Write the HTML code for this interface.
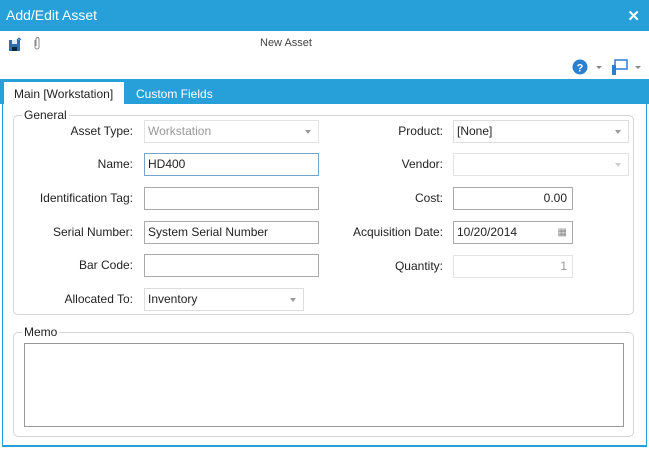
<!DOCTYPE html>
<html><head><meta charset="utf-8"><style>
*{box-sizing:border-box;margin:0;padding:0}
body{width:649px;height:449px;background:#fff;font-family:"Liberation Sans",sans-serif;font-size:12px;color:#222;position:relative;overflow:hidden}
.a{position:absolute}
.title{left:0;top:0;width:649px;height:31px;background:#27a0da;color:#fff;font-size:14px;line-height:31px;padding-left:6px}
.tabbar{left:0;top:79px;width:649px;height:25px;background:#27a0da}
.panel{left:2px;top:104px;width:645px;height:343px;border:1px solid #27a0da;border-top:none;border-bottom:2px solid #27a0da}
.grp{border:1px solid #d4d4d4;border-radius:5px}
.leg{background:#fff;padding:0 2px;font-size:12px;line-height:14px}
.lbl{text-align:right;width:130px;font-size:12px;line-height:22px}
.in{border:1px solid #aaa;background:#fff;height:23px;line-height:21px;padding-left:3px;font-size:12px}
.dis{border:1px solid #e3e3e3;color:#999}
.arr{position:absolute;right:7px;top:9px;width:0;height:0;border-left:3px solid transparent;border-right:3px solid transparent;border-top:4px solid #999}
</style></head><body>
<div class="a title">Add/Edit Asset</div>
<div class="a" style="right:9px;top:7px;color:#fff;font-size:15px;font-weight:bold">✕</div>
<svg class="a" style="left:9px;top:37px" width="14" height="14"><rect x="0" y="3" width="11" height="11" fill="#2a6fb0"/><rect x="3" y="3" width="5" height="4" fill="#dfe9f3"/><rect x="3" y="10" width="5" height="4" fill="#123"/><path d="M10 1v6M8 3l2-2 2 2" stroke="#2a6fb0" fill="none"/></svg>
<svg class="a" style="left:33px;top:36px" width="8" height="15"><path d="M2 4v7a2 2 0 004 0V3a1.5 1.5 0 00-3 0v7" stroke="#888" fill="none"/></svg>
<div class="a" style="left:260px;top:37px;font-size:11px;color:#444">New Asset</div>
<svg class="a" style="left:572px;top:59px" width="16" height="16"><circle cx="8" cy="8" r="7.5" fill="#2b7fd0"/><text x="8" y="12.5" font-size="11" font-weight="bold" fill="#fff" text-anchor="middle" font-family="Liberation Sans">?</text></svg>
<div class="a" style="left:596px;top:66px;border-left:3px solid transparent;border-right:3px solid transparent;border-top:3px solid #888"></div>
<svg class="a" style="left:611px;top:59px" width="18" height="17"><rect x="4" y="1" width="12" height="9" fill="#fff" stroke="#2b7fd0" stroke-width="1.5"/><rect x="1" y="6" width="4" height="10" fill="#2b7fd0"/></svg>
<div class="a" style="left:635px;top:66px;border-left:3px solid transparent;border-right:3px solid transparent;border-top:3px solid #888"></div>
<div class="a tabbar"></div>
<div class="a" style="left:4px;top:82px;width:120px;height:23px;background:#fff;line-height:24px;padding-left:10px">Main [Workstation]</div>
<div class="a" style="left:136px;top:82px;line-height:24px;color:#fff">Custom Fields</div>
<div class="a panel"></div>
<div class="a grp" style="left:13px;top:115px;width:621px;height:200px"></div>
<div class="a leg" style="left:22px;top:108px">General</div>
<div class="a lbl" style="left:3px;top:120px">Asset Type:</div>
<div class="a in dis" style="left:144px;top:120px;width:175px">Workstation<span class="arr"></span></div>
<div class="a lbl" style="left:3px;top:153px">Name:</div>
<div class="a in" style="left:144px;top:153px;width:175px;border-color:#7aa3c8">HD400</div>
<div class="a lbl" style="left:3px;top:187px">Identification Tag:</div>
<div class="a in" style="left:144px;top:187px;width:175px"></div>
<div class="a lbl" style="left:3px;top:221px">Serial Number:</div>
<div class="a in" style="left:144px;top:221px;width:175px">System Serial Number</div>
<div class="a lbl" style="left:3px;top:254px">Bar Code:</div>
<div class="a in" style="left:144px;top:254px;width:175px"></div>
<div class="a lbl" style="left:3px;top:288px">Allocated To:</div>
<div class="a in" style="left:144px;top:288px;width:160px;border-color:#ddd">Inventory<span class="arr"></span></div>
<div class="a lbl" style="left:313px;top:120px">Product:</div>
<div class="a in" style="left:453px;top:120px;width:176px;border-color:#ddd">[None]<span class="arr"></span></div>
<div class="a lbl" style="left:313px;top:153px">Vendor:</div>
<div class="a in dis" style="left:453px;top:153px;width:176px"><span class="arr" style="border-top-color:#ccc"></span></div>
<div class="a lbl" style="left:313px;top:187px">Cost:</div>
<div class="a in" style="left:453px;top:187px;width:120px;text-align:right;padding-right:5px">0.00</div>
<div class="a lbl" style="left:313px;top:221px">Acquisition Date:</div>
<div class="a in" style="left:453px;top:221px;width:120px">10/20/2014<span style="position:absolute;right:5px;top:0;color:#888;font-size:10px">▦</span></div>
<div class="a lbl" style="left:313px;top:255px">Quantity:</div>
<div class="a in dis" style="left:453px;top:255px;width:120px;text-align:right;padding-right:5px">1</div>
<div class="a grp" style="left:13px;top:332px;width:621px;height:105px"></div>
<div class="a leg" style="left:22px;top:325px">Memo</div>
<div class="a" style="left:24px;top:343px;width:600px;height:84px;border:1px solid #999"></div>
</body></html>
